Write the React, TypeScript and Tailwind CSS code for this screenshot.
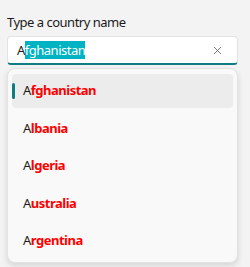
import { X } from "lucide-react";

const countries = ["Afghanistan", "Albania", "Algeria", "Australia", "Argentina"];

const App = () => {
  return (
    <div
      className="w-[250px] h-[267px] bg-[#f3f3f3] px-[7px] pt-[12px] text-[13px] tracking-[-0.5px] text-[#1b1b1b]"
      style={{ fontFamily: '"Noto Sans", "Open Sans", sans-serif' }}
    >
      <label className="block leading-[20px] mb-[4px]">Type a country name</label>
      <div className="w-[231px] h-[29px] bg-white border border-[#e3e3e3] border-b-2 border-b-[#0f7c84] rounded-[4px] flex items-center pl-[9px] pr-[13px]">
        <span className="leading-[18px]">
          A<span className="bg-[#00b3c2] text-white">fghanistan</span>
        </span>
        <X className="ml-auto w-[13px] h-[13px] text-[#5c5c5c]" strokeWidth={1.5} />
      </div>
      <div className="mt-[3px] w-[231px] bg-[#f9f9f9] border border-[#e2e2e2] rounded-[8px] shadow-[0_3px_6px_rgba(0,0,0,0.12)] px-[4px] pt-[5px] pb-[4px] flex flex-col gap-[4px]">
        {countries.map((c, i) => (
          <div
            key={c}
            className={
              "relative h-[33.5px] flex items-center pl-[11px] rounded-[4px] " +
              (i === 0 ? "bg-[#ececec]" : "")
            }
          >
            {i === 0 && (
              <span className="absolute left-0 top-[9px] w-[3px] h-[16px] rounded-full bg-[#0f7c84]" />
            )}
            <span>
              A<span className="font-bold text-[#ff0000]">{c.slice(1)}</span>
            </span>
          </div>
        ))}
      </div>
    </div>
  );
};

export default App;
